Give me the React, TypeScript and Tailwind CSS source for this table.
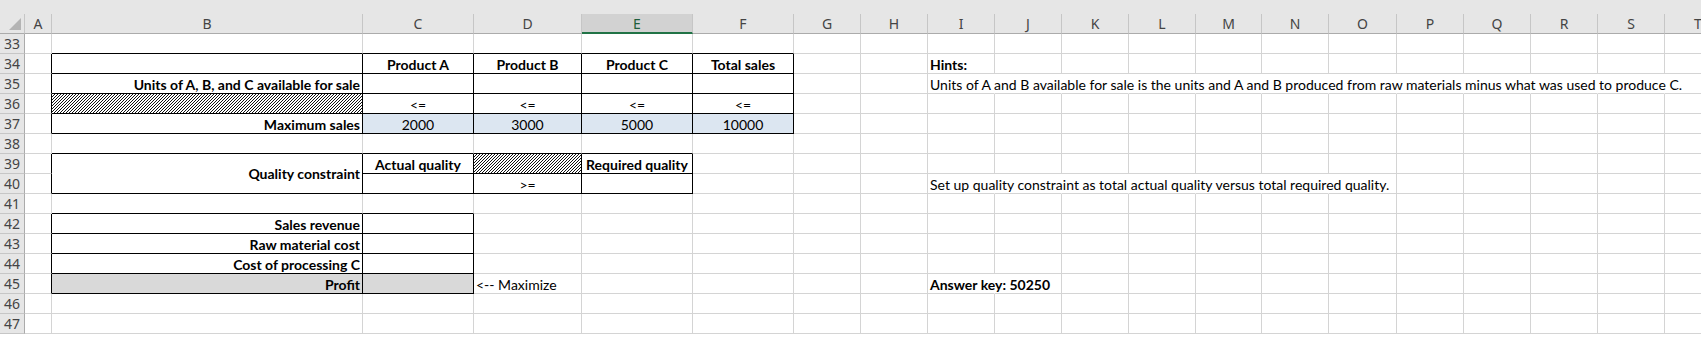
import React from "react";

type Align = "left" | "center" | "right";
type Fill = "blue" | "gray" | "hatch";
type CellData = {
  text?: string;
  bold?: boolean;
  align?: Align;
  fill?: Fill;
  rowSpan?: boolean;
};

const COLS = ["A", "B", "C", "D", "E", "F", "G", "H", "I", "J", "K", "L", "M", "N", "O", "P", "Q", "R", "S", "T"];
const ROWS = Array.from({ length: 15 }, (_, i) => 33 + i);

const cells: Record<string, CellData> = {
  C34: { text: "Product A", bold: true, align: "center" },
  D34: { text: "Product B", bold: true, align: "center" },
  E34: { text: "Product C", bold: true, align: "center" },
  F34: { text: "Total sales", bold: true, align: "center" },
  B35: { text: "Units of A, B, and C available for sale", bold: true, align: "right" },
  B36: { fill: "hatch" },
  C36: { text: "<=", align: "center" },
  D36: { text: "<=", align: "center" },
  E36: { text: "<=", align: "center" },
  F36: { text: "<=", align: "center" },
  B37: { text: "Maximum sales", bold: true, align: "right" },
  C37: { text: "2000", align: "center", fill: "blue" },
  D37: { text: "3000", align: "center", fill: "blue" },
  E37: { text: "5000", align: "center", fill: "blue" },
  F37: { text: "10000", align: "center", fill: "blue" },
  B39: { text: "Quality constraint", bold: true, align: "right", rowSpan: true },
  C39: { text: "Actual quality", bold: true, align: "center" },
  D39: { fill: "hatch" },
  E39: { text: "Required quality", bold: true, align: "center" },
  D40: { text: ">=", align: "center" },
  B42: { text: "Sales revenue", bold: true, align: "right" },
  B43: { text: "Raw material cost", bold: true, align: "right" },
  B44: { text: "Cost of processing C", bold: true, align: "right" },
  B45: { text: "Profit", bold: true, align: "right", fill: "gray" },
  C45: { fill: "gray" },
  D45: { text: "<-- Maximize" },
  I34: { text: "Hints:", bold: true },
  I35: {
    text: "Units of A and B available for sale is the units and A and B produced from raw materials minus what was used to produce C.",
  },
  I40: { text: "Set up quality constraint as total actual quality versus total required quality." },
  I45: { text: "Answer key: 50250", bold: true },
};

// bordered blocks: [rowFrom, rowTo, colFrom, colTo]
const boxes = [
  [34, 37, 1, 5],
  [39, 40, 1, 4],
  [42, 45, 1, 2],
];

// gridlines hidden by overflowing text: [row, colFrom, colTo]
const hidden = [
  [35, 8, 19],
  [40, 8, 13],
  [45, 8, 8],
];

const boxed = (r: number, c: number) =>
  boxes.some(([r1, r2, c1, c2]) => r >= r1 && r <= r2 && c >= c1 && c <= c2);

const hiddenV = (r: number, c: number) =>
  hidden.some(([row, c1, c2]) => row === r && c >= c1 && c <= c2);

function Hatch({ id }: { id: string }) {
  return (
    <svg className="block w-full h-full" shapeRendering="crispEdges">
      <defs>
        <pattern id={id} width="3" height="3" patternUnits="userSpaceOnUse">
          <rect x="2" y="0" width="1" height="1" fill="#111" />
          <rect x="1" y="1" width="1" height="1" fill="#111" />
          <rect x="0" y="2" width="1" height="1" fill="#111" />
        </pattern>
      </defs>
      <rect width="100%" height="100%" fill="#fff" />
      <rect width="100%" height="100%" fill={`url(#${id})`} />
    </svg>
  );
}

function Cell({ r, c }: { r: number; c: number }) {
  const key = COLS[c] + r;
  const d = cells[key] || {};
  const rightBlack = boxed(r, c) || boxed(r, c + 1);
  const bottomRow = d.rowSpan ? r + 1 : r;
  const bottomBlack = boxed(bottomRow, c) || boxed(bottomRow + 1, c);

  const right = rightBlack
    ? "border-r-black"
    : hiddenV(r, c)
    ? "border-r-transparent"
    : "border-r-[#d4d4d4]";
  const bottom = bottomBlack ? "border-b-black" : "border-b-[#d4d4d4]";

  const fill = d.fill === "blue" ? "bg-[#dce6f1]" : d.fill === "gray" ? "bg-[#d9d9d9]" : "";

  const justify =
    d.align === "center" ? "justify-center" : d.align === "right" ? "justify-end" : "justify-start";

  if (d.fill === "hatch") {
    return (
      <div className={`border-r border-b ${right} ${bottom}`}>
        <Hatch id={`hatch-${key}`} />
      </div>
    );
  }

  return (
    <div
      className={`flex border-r border-b px-[2px] whitespace-nowrap ${right} ${bottom} ${fill} ${justify} ${
        d.rowSpan ? "row-span-2 items-center" : "items-end"
      }`}
    >
      {d.text && (
        <span className={`relative z-10 text-[14px] leading-[16px] text-black ${d.bold ? "font-bold" : ""}`}>
          {d.text}
        </span>
      )}
    </div>
  );
}

export default function App() {
  return (
    <div className="w-[1701px] h-[337px] overflow-hidden bg-white font-['Lato',sans-serif]">
      <div className="h-[14px] bg-[#e6e6e6]" />
      <div className="grid grid-cols-[25px_27px_311px_111px_108px_111px_101px_67px_67px_67px_67px_67px_67px_66px_67px_68px_67px_67px_67px_67px_67px] auto-rows-[20px] w-[1732px]">
        {/* column headers */}
        <div className="relative bg-[#e6e6e6] border-r border-b border-r-[#c6c6c6] border-b-[#ababab]">
          <svg className="absolute right-[3px] bottom-[3px]" width="12" height="12" viewBox="0 0 12 12">
            <polygon points="12,0 12,12 0,12" fill="#b4b4b4" />
          </svg>
        </div>
        {COLS.map((col) =>
          col === "E" ? (
            <div
              key={col}
              className="flex items-center justify-center bg-[#d2d2d2] border-r border-r-[#c6c6c6] border-b-2 border-b-[#217346] font-['Noto_Sans',sans-serif] text-[14px] text-[#1e5e3c]"
            >
              {col}
            </div>
          ) : (
            <div
              key={col}
              className="flex items-center justify-center bg-[#e6e6e6] border-r border-b border-r-[#c6c6c6] border-b-[#ababab] font-['Noto_Sans',sans-serif] text-[14px] text-[#444]"
            >
              {col}
            </div>
          )
        )}

        {ROWS.map((r) => (
          <React.Fragment key={r}>
            <div className="flex items-center justify-center bg-[#e6e6e6] border-r border-b border-r-[#ababab] border-b-[#c6c6c6] font-['Noto_Sans',sans-serif] text-[14px] text-[#444]">
              {r}
            </div>
            {COLS.map((_, c) =>
              COLS[c] + r === "B40" ? null : <Cell key={c} r={r} c={c} />
            )}
          </React.Fragment>
        ))}
      </div>
    </div>
  );
}
